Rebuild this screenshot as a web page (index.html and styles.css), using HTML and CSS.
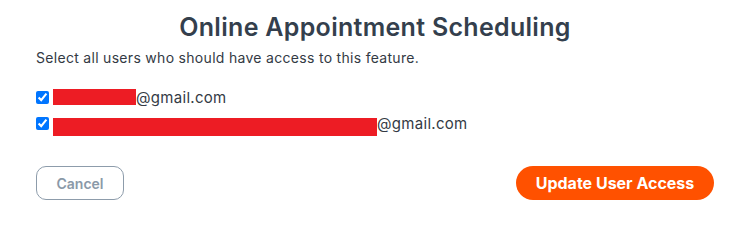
FILE: index.html
```html
<!DOCTYPE html>
<html lang="en">
<head>
    <meta charset="UTF-8">
    <title>Online Appointment Scheduling</title>
    <link rel="stylesheet" href="styles.css">
</head>
<body>
    <div class="modal">
        <h1>Online Appointment Scheduling</h1>
        <p class="intro">Select all users who should have access to this feature.</p>

        <div class="user-list">
            <label class="user-row">
                <input type="checkbox" checked>
                <span class="redacted short"></span>@gmail.com
            </label>
            <label class="user-row">
                <input type="checkbox" checked>
                <span class="redacted long"></span>@gmail.com
            </label>
        </div>

        <div class="actions">
            <button class="btn-cancel">Cancel</button>
            <button class="btn-update">Update User Access</button>
        </div>
    </div>
</body>
</html>
```

FILE: styles.css
```css
body {
    margin: 0;
    background-color: #ffffff;
    font-family: Inter, "Open Sans", sans-serif;
    color: #333a44;
}
.modal {
    padding: 12px 33px 20px 36px;
}
h1 {
    margin: 0;
    text-align: center;
    font-size: 25px;
    font-weight: 600;
    letter-spacing: 0.3px;
    color: #343f4d;
    line-height: 30px;
}
.intro {
    margin: 7px 0 0;
    font-size: 14px;
    line-height: 18px;
    letter-spacing: 0.3px;
}
.user-list {
    display: flex;
    flex-direction: column;
    gap: 8px;
    margin-top: 21px;
}
.user-row {
    display: flex;
    align-items: center;
    font-size: 15px;
    letter-spacing: 0.3px;
    height: 18px;
}
.user-row input {
    margin: 0 4px 0 0;
    width: 13px;
    height: 13px;
}
.redacted {
    background-color: #ed1c24;
    display: inline-block;
}
.redacted.short {
    width: 83px;
    height: 16px;
}
.redacted.long {
    width: 324px;
    height: 18px;
    margin-top: 8px;
}
.actions {
    display: flex;
    justify-content: space-between;
    margin-top: 34px;
}
.btn-cancel {
    width: 88px;
    height: 34px;
    border: 1px solid #8d9cab;
    border-radius: 10px;
    background: #ffffff;
    color: #8a99a8;
    font-family: inherit;
    font-size: 14px;
    font-weight: 600;
}
.btn-update {
    width: 198px;
    height: 34px;
    border: none;
    border-radius: 17px;
    background-color: #ff5100;
    color: #ffffff;
    font-family: inherit;
    font-size: 16px;
    font-weight: 700;
}
```
